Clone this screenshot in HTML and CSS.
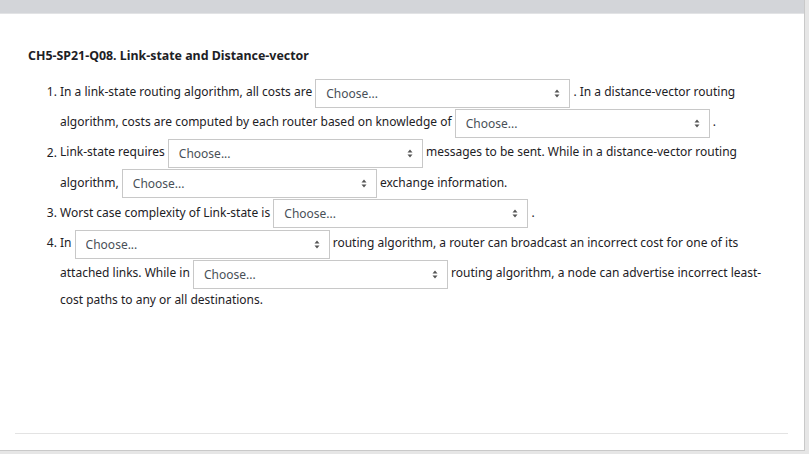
FILE: index.html
```html
<!DOCTYPE html>
<html>
<head>
<meta charset="utf-8">
<link rel="stylesheet" href="styles.css">
</head>
<body>
<div class="frame">
  <div class="topbar"></div>
  <div class="content">
    <h3 class="qtitle">CH5-SP21-Q08. Link-state and Distance-vector</h3>
    <ol class="qlist">
      <li>In a link-state routing algorithm, all costs are <span class="sel"><select><option>Choose...</option></select><svg class="arr" width="6" height="9" viewBox="0 0 6 9"><path d="M3 0.5 L5.5 3.5 H0.5 Z M3 8.5 L5.5 5.5 H0.5 Z" fill="#555"/></svg></span> . In a distance-vector routing algorithm, costs are computed by each router based on knowledge of <span class="sel"><select><option>Choose...</option></select><svg class="arr" width="6" height="9" viewBox="0 0 6 9"><path d="M3 0.5 L5.5 3.5 H0.5 Z M3 8.5 L5.5 5.5 H0.5 Z" fill="#555"/></svg></span> .</li>
      <li>Link-state requires <span class="sel"><select><option>Choose...</option></select><svg class="arr" width="6" height="9" viewBox="0 0 6 9"><path d="M3 0.5 L5.5 3.5 H0.5 Z M3 8.5 L5.5 5.5 H0.5 Z" fill="#555"/></svg></span> messages to be sent. While in a distance-vector routing algorithm, <span class="sel"><select><option>Choose...</option></select><svg class="arr" width="6" height="9" viewBox="0 0 6 9"><path d="M3 0.5 L5.5 3.5 H0.5 Z M3 8.5 L5.5 5.5 H0.5 Z" fill="#555"/></svg></span> exchange information.</li>
      <li>Worst case complexity of Link-state is <span class="sel"><select><option>Choose...</option></select><svg class="arr" width="6" height="9" viewBox="0 0 6 9"><path d="M3 0.5 L5.5 3.5 H0.5 Z M3 8.5 L5.5 5.5 H0.5 Z" fill="#555"/></svg></span> .</li>
      <li>In <span class="sel"><select><option>Choose...</option></select><svg class="arr" width="6" height="9" viewBox="0 0 6 9"><path d="M3 0.5 L5.5 3.5 H0.5 Z M3 8.5 L5.5 5.5 H0.5 Z" fill="#555"/></svg></span> routing algorithm, a router can broadcast an incorrect cost for one of its attached links. While in <span class="sel"><select><option>Choose...</option></select><svg class="arr" width="6" height="9" viewBox="0 0 6 9"><path d="M3 0.5 L5.5 3.5 H0.5 Z M3 8.5 L5.5 5.5 H0.5 Z" fill="#555"/></svg></span> routing algorithm, a node can advertise incorrect least-cost paths to any or all destinations.</li>
    </ol>
    <div class="spacer"></div>
    <hr class="rule">
  </div>
</div>
</body>
</html>
```
FILE: styles.css
```css
html, body { margin: 0; padding: 0; }
body {
  background: #e6e6e6;
  width: 809px;
  height: 454px;
  overflow: hidden;
  font-family: "Noto Sans", "Open Sans", sans-serif;
  color: #1d2125;
}
.frame {
  width: 804px;
  height: 450px;
  background: #fff;
  border-right: 1px solid #c9c9c9;
  border-bottom: 1px solid #c9c9c9;
  display: flex;
  flex-direction: column;
}
.topbar {
  height: 13px;
  background: #d3d5d9;
  border-bottom: 1px solid #e2e3e5;
}
.content {
  flex: 1;
  display: flex;
  flex-direction: column;
  padding: 0 16px 0 28px;
}
.qtitle {
  margin: 32px 0 0;
  font-size: 12.4px;
  font-weight: 700;
  line-height: 20px;
}
.qlist {
  margin: 12px 0 0;
  padding-left: 32px;
  font-size: 12px;
  line-height: 22.5px;
  padding-right: 0;
  width: 718px;
}
.qlist li { margin: 0; }
.sel {
  position: relative;
  display: inline-block;
  vertical-align: middle;
  margin: 0.6px 0;
}
.sel select {
  -webkit-appearance: none;
  appearance: none;
  width: 255px;
  height: 29px;
  border: 1px solid #c8c8c8;
  border-radius: 0;
  background: #fff;
  color: #495057;
  font-family: inherit;
  font-size: 12px;
  padding: 0 10px;
  display: block;
}
.arr {
  position: absolute;
  right: 10px;
  top: 10px;
  pointer-events: none;
}
.spacer { flex: 1; }
.rule {
  margin: 0 0 16px -13px;
  border: 0;
  border-top: 1px solid #e3e3e3;
  width: 773px;
}
```
